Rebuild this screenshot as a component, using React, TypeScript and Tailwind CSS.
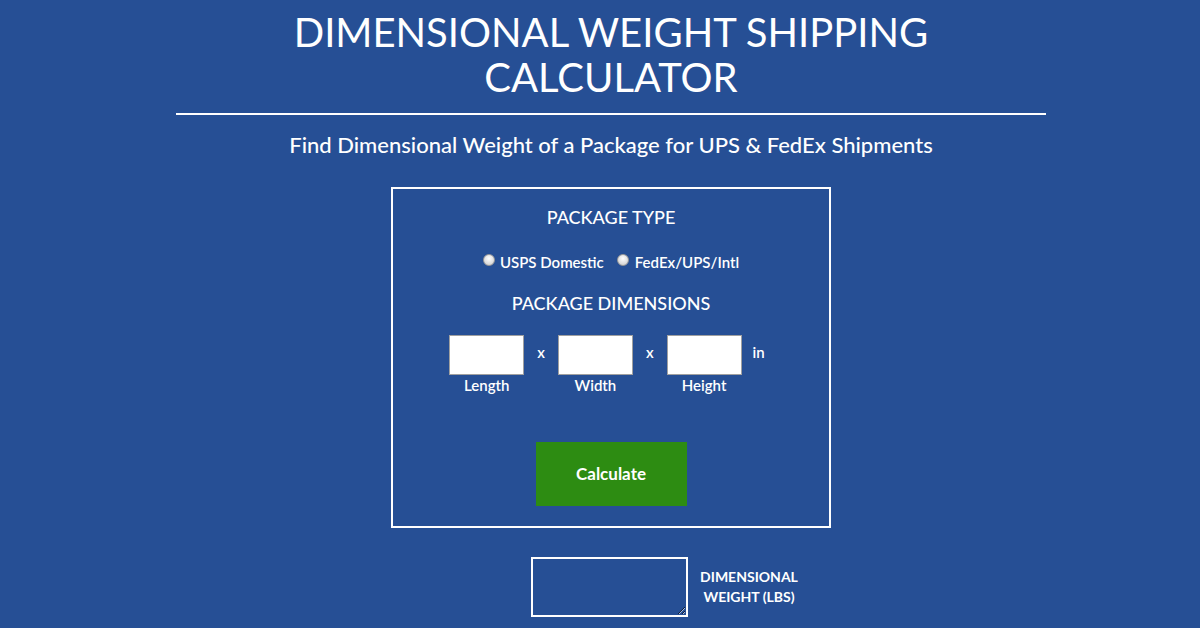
import React from 'react';

const Field: React.FC<{ label: string }> = ({ label }) => (
  <div className="flex flex-col items-center">
    <input type="text" className="w-[75px] h-[40px] bg-white border border-[#a0a0a0] outline-none" />
    <span className="text-[15px] font-semibold mt-[1px] leading-[18px]">{label}</span>
  </div>
);

export default function App() {
  return (
    <div className="w-[1200px] h-[628px] overflow-hidden bg-[#264f95] text-white font-['Lato','Liberation_Sans',sans-serif] flex flex-col items-center pl-[22px]">
      <h1 className="mt-[10px] text-[40px] leading-[45px] text-center w-[720px] font-normal">
        DIMENSIONAL WEIGHT SHIPPING CALCULATOR
      </h1>
      <div className="mt-[13px] w-[870px] h-[2px] bg-white" />
      <p className="mt-[17px] text-[22px] font-medium leading-[26px]">
        Find Dimensional Weight of a Package for UPS &amp; FedEx Shipments
      </p>

      <div className="mt-[29px] w-[440px] h-[341px] border-2 border-white flex flex-col items-center">
        <h2 className="mt-[17px] text-[18px] font-medium leading-[22px]">PACKAGE TYPE</h2>
        <div className="mt-[25px] flex items-center text-[15px] font-semibold leading-[18px]">
          <label className="flex items-center">
            <span className="w-[12px] h-[12px] rounded-full bg-[radial-gradient(circle_at_50%_35%,#ffffff,#c8c8c8)] border border-[#9a9a9a] mr-[5px] -mt-[5px]" />
            USPS Domestic
          </label>
          <label className="flex items-center ml-[13px]">
            <span className="w-[12px] h-[12px] rounded-full bg-[radial-gradient(circle_at_50%_35%,#ffffff,#c8c8c8)] border border-[#9a9a9a] mr-[6px] -mt-[5px]" />
            FedEx/UPS/Intl
          </label>
        </div>
        <h2 className="mt-[21px] text-[18px] font-medium leading-[22px]">PACKAGE DIMENSIONS</h2>
        <div className="mt-[21px] flex items-start text-[15px] font-semibold mr-[8px]">
          <Field label="Length" />
          <span className="mx-[13px] mt-[8px] leading-[18px]">x</span>
          <Field label="Width" />
          <span className="mx-[13px] mt-[8px] leading-[18px]">x</span>
          <Field label="Height" />
          <span className="ml-[11px] mt-[8px] leading-[18px]">in</span>
        </div>
        <button className="mt-[48px] w-[151px] h-[64px] bg-[#2d8c12] text-white text-[17px] font-bold">
          Calculate
        </button>
      </div>

      <div className="mt-[29px] flex items-center ml-[107px]">
        <textarea className="w-[157px] h-[60px] bg-transparent border-2 border-white outline-none resize-y" />
        <div className="ml-[12px] text-[14px] font-bold leading-[20px] text-center">
          DIMENSIONAL
          <br />
          WEIGHT (LBS)
        </div>
      </div>
    </div>
  );
}
